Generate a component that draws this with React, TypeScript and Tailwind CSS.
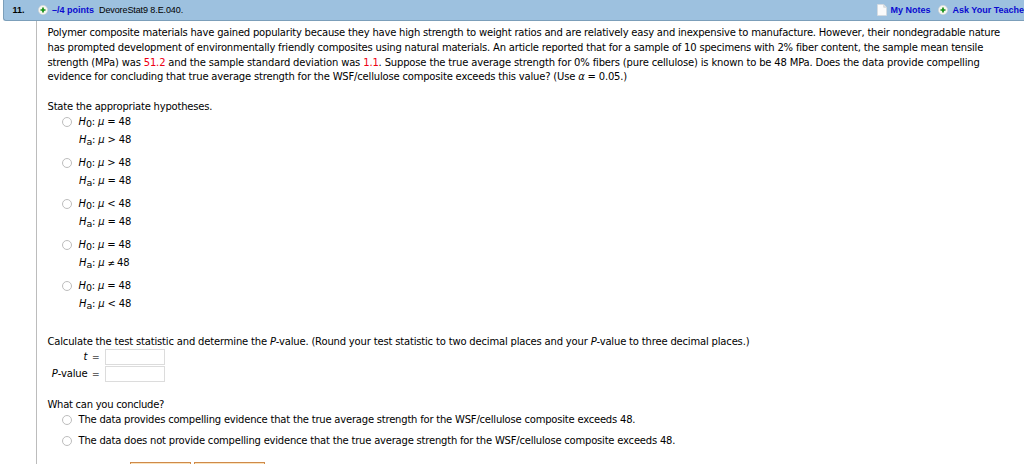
import type { ReactNode } from "react";

function PlusBadge() {
  return (
    <svg className="size-[10px] shrink-0" viewBox="0 0 10 10">
      <circle cx="5" cy="5" r="4.7" fill="#f7f5ee" stroke="#c3cdd0" strokeWidth=".5" />
      <path d="M5 2.5v5M2.5 5h5" stroke="#159015" strokeWidth="1.7" />
    </svg>
  );
}

function NoteIcon() {
  return (
    <svg className="h-[12px] w-[10px] shrink-0" viewBox="0 0 10 12">
      <path d="M.5.5h6.2l2.8 2.8v8.2h-9z" fill="#fbfbfb" stroke="#d5dade" strokeWidth=".8" />
      <path d="M6.7.5v2.8h2.8" fill="#dfe3e6" stroke="#c3c9ce" strokeWidth=".6" />
    </svg>
  );
}

function Radio() {
  return (
    <span
      role="radio"
      aria-checked="false"
      className="block size-[10px] shrink-0 rounded-full border border-[#bdbdbd] bg-white"
    />
  );
}

function Choice({ children }: { children: ReactNode }) {
  return (
    <div className="flex h-[15px] items-center pl-[14px]">
      <Radio />
      <div className="ml-[7px]">{children}</div>
    </div>
  );
}

function Hypothesis({ sub, relation }: { sub: string; relation: string }) {
  return (
    <span className="flex h-[15px] items-center tracking-[-0.15px]">
      <i>H</i>
      <span className="relative top-[2px] text-[9.5px]">{sub}</span>
      <span className="whitespace-pre">
        : <i>μ</i> <span className={relation === "≠" ? "-mr-[1px] text-[9px]" : ""}>{relation}</span> 48
      </span>
    </span>
  );
}

const hypotheses: [string, string][] = [
  ["=", ">"],
  [">", "="],
  ["<", "="],
  ["=", "≠"],
  ["=", "<"],
];

export default function App() {
  return (
    <div className="h-[464px] w-[1024px] overflow-hidden bg-white pl-[3px] font-['DejaVu_Sans',Verdana,sans-serif] text-[10px] leading-[15px] whitespace-nowrap text-black">
      <header className="flex h-[21px] items-center rounded-bl-[3px] border-b border-l border-[#7c9fba] bg-[#9dc1df] font-['Liberation_Sans',Arial,sans-serif] text-[9px]">
        <b className="w-[25px] shrink-0 pl-[8.5px]">11.</b>
        <span className="ml-[9px] flex shrink-0">
          <PlusBadge />
        </span>
        <b className="ml-[4px] w-[47px] shrink-0 text-[#0a0ad0]">–/4 points</b>
        <span className="tracking-[-0.1px]">DevoreStat9 8.E.040.</span>
        <span className="ml-auto flex w-[147px] shrink-0 items-center overflow-hidden font-bold text-[#0a0ad0]">
          <NoteIcon />
          <span className="ml-[3.5px] w-[47px] shrink-0">My Notes</span>
          <PlusBadge />
          <span className="ml-[5px] shrink-0">Ask Your Teacher</span>
        </span>
      </header>

      <main className="ml-[33px] h-[443px] border-l border-[#bcbcbc] pt-[5px] pl-[10.5px]">
        <div className="leading-[14.8px]">
          <p className="tracking-[-0.21px]">
            Polymer composite materials have gained popularity because they have high strength to weight ratios and are relatively easy and inexpensive to manufacture. However, their nondegradable nature
          </p>
          <p className="tracking-[-0.198px]">
            has prompted development of environmentally friendly composites using natural materials. An article reported that for a sample of 10 specimens with 2% fiber content, the sample mean tensile
          </p>
          <p className="tracking-[-0.163px]">
            strength (MPa) was <span className="text-[#ee0014]">51.2</span> and the sample standard deviation was{" "}
            <span className="text-[#ee0014]">1.1</span>. Suppose the true average strength for 0% fibers (pure cellulose) is known to be 48 MPa. Does the data provide compelling
          </p>
          <p className="tracking-[-0.186px]">
            evidence for concluding that true average strength for the WSF/cellulose composite exceeds this value? (Use <i>α</i> = 0.05.)
          </p>
        </div>

        <p className="mt-[14px] tracking-[-0.21px]">State the appropriate hypotheses.</p>
        <div className="flex flex-col gap-[8px]">
          {hypotheses.map(([h0, ha], i) => (
            <div key={i} className="flex h-[33px] flex-col justify-between">
              <Choice>
                <Hypothesis sub="0" relation={h0} />
              </Choice>
              <div className="pl-[31.5px]">
                <Hypothesis sub="a" relation={ha} />
              </div>
            </div>
          ))}
        </div>

        <p className="mt-[23px] tracking-[-0.176px]">
          Calculate the test statistic and determine the <i>P</i>-value. (Round your test statistic to two decimal places and your <i>P</i>-value to three decimal places.)
        </p>
        <div className="flex flex-col gap-[1px]">
          <div className="flex h-[16px] items-center">
            <span className="w-[40px] pb-[2px] text-right">
              <i>t</i>
            </span>
            <b className="ml-[4.5px] w-[12.5px] text-[9px] text-[#666]">=</b>
            <input className="h-[16px] w-[60px] border border-[#dcdcdc] bg-white" />
          </div>
          <div className="flex h-[16px] items-center">
            <span className="w-[40px] pb-[2px] text-right tracking-[-0.15px]">
              <i>P</i>-value
            </span>
            <b className="ml-[4.5px] w-[12.5px] text-[9px] text-[#666]">=</b>
            <input className="h-[16px] w-[60px] border border-[#dcdcdc] bg-white" />
          </div>
        </div>

        <p className="mt-[15px] tracking-[-0.27px]">What can you conclude?</p>
        <div className="flex flex-col gap-[6px]">
          <Choice>
            <span className="tracking-[-0.21px]">
              The data provides compelling evidence that the true average strength for the WSF/cellulose composite exceeds 48.
            </span>
          </Choice>
          <Choice>
            <span className="tracking-[-0.208px]">
              The data does not provide compelling evidence that the true average strength for the WSF/cellulose composite exceeds 48.
            </span>
          </Choice>
        </div>
        <div className="mt-[14px] ml-[82px] flex gap-[3px]">
          <span className="h-[16px] w-[61px] border border-[#cf8a4a] bg-[#fbe3bd]" />
          <span className="h-[16px] w-[71px] border border-[#cf8a4a] bg-[#fbe3bd]" />
        </div>
      </main>
    </div>
  );
}
